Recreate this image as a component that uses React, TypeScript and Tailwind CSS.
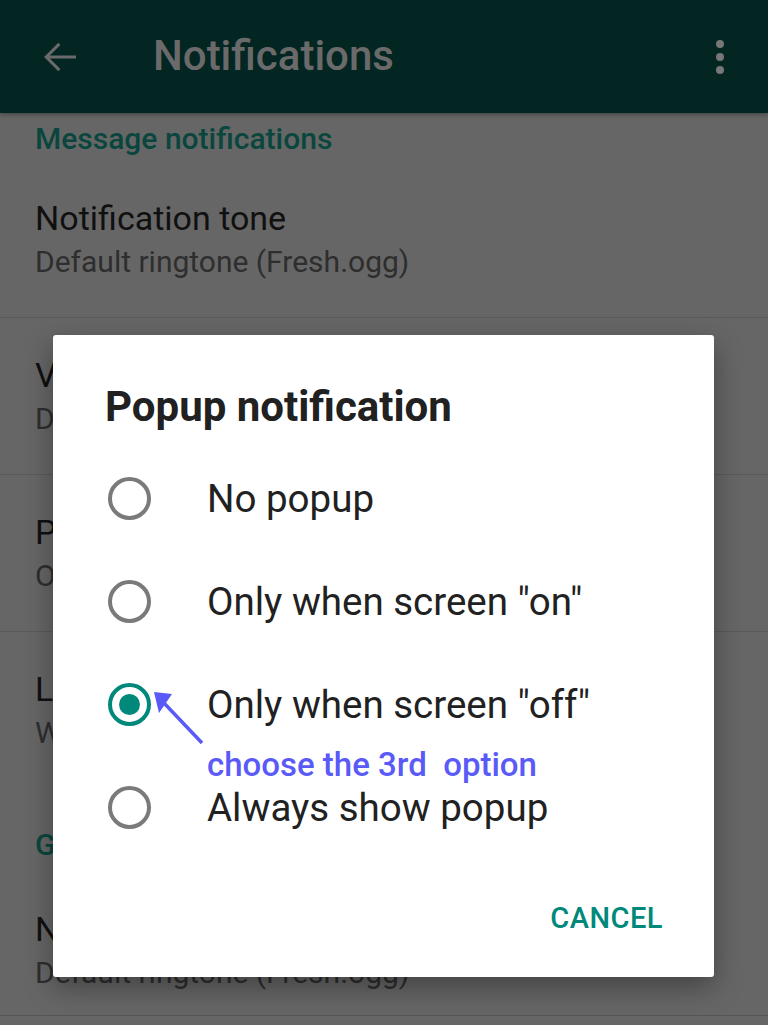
import type { ReactNode } from 'react'

const options = ['No popup', 'Only when screen "on"', 'Only when screen "off"', 'Always show popup']

function Radio ({ checked }: { checked: boolean }): JSX.Element {
  return (
    <svg width="43" height="43" viewBox="0 0 43 43" className="shrink-0">
      <circle cx="21.5" cy="21.5" r="19.5" fill="none" strokeWidth="4" stroke={checked ? '#00897b' : '#7a7a7a'} />
      {checked && <circle cx="21.5" cy="21.5" r="10.5" fill="#00897b" />}
    </svg>
  )
}

function Category ({ children, className }: { children: ReactNode, className: string }): JSX.Element {
  return (
    <div className={`px-[35px] text-[30px] leading-[32px] font-medium text-[#0a463e] ${className}`}>
      {children}
    </div>
  )
}

function Item ({ title, sub, className = 'h-[157px] border-b border-[#5a5a5a]' }: { title: string, sub: string, className?: string }): JSX.Element {
  return (
    <div className={`flex flex-col px-[35px] pt-[37px] ${className}`}>
      <span className="text-[34px] leading-[40px] text-[#101010]">{title}</span>
      <span className="mt-[6px] text-[30px] leading-[36px] text-[#2e2e2e]">{sub}</span>
    </div>
  )
}

export default function App (): JSX.Element {
  return (
    <div className="relative w-[768px] h-[1025px] overflow-hidden bg-[#666666]" style={{ fontFamily: 'Roboto, "Noto Sans", sans-serif' }}>
      <header className="h-[113px] bg-[#032622] flex items-center shadow-[0_2px_4px_rgba(0,0,0,0.3)] relative z-10">
        <svg width="48" height="48" viewBox="0 0 24 24" className="ml-[36px]" fill="#6a6a6a">
          <path d="M20 11.25H6.9l5.3-5.3-1.05-1.05L4.05 12l7.1 7.1 1.05-1.05-5.3-5.3H20z" />
        </svg>
        <h1 className="ml-[69px] text-[42px] leading-[48px] font-medium text-[#6a6a6a] mb-[2px]">Notifications</h1>
        <div className="ml-auto mr-[44px] flex flex-col gap-[5px]">
          <span className="w-[8px] h-[8px] rounded-full bg-[#777777]" />
          <span className="w-[8px] h-[8px] rounded-full bg-[#777777]" />
          <span className="w-[8px] h-[8px] rounded-full bg-[#777777]" />
        </div>
      </header>

      <main className="flex flex-col">
        <Category className="h-[48px] pt-[10px]">Message notifications</Category>
        <Item title="Notification tone" sub="Default ringtone (Fresh.ogg)" />
        <Item title="Vibrate" sub="Default" />
        <Item title="Popup notification" sub='Only when screen "off"' />
        <Item title="Light" sub="White" className="h-[157px]" />
        <Category className="h-[83px] pt-[40px]">Group notifications</Category>
        <Item title="Notification tone" sub="Default ringtone (Fresh.ogg)" className="h-[144px] border-b border-[#555555]" />
      </main>

      <section className="absolute left-[53px] top-[335px] w-[661px] h-[642px] bg-white rounded-[3px] shadow-[0_10px_28px_rgba(0,0,0,0.35)] z-20">
        <h2 className="pt-[48px] pl-[52px] text-[42px] leading-[48px] font-bold text-[#212121]">Popup notification</h2>
        <ul className="mt-[16px] flex flex-col">
          {options.map((o, i) => (
            <li key={o} className="h-[103px] flex items-center pl-[55px]">
              <Radio checked={i === 2} />
              <span className="ml-[56px] text-[38.5px] leading-[44px] text-[#212121]">{o}</span>
            </li>
          ))}
        </ul>
        <div className="mt-[41px] flex justify-end pr-[51px]">
          <button className="text-[29px] leading-[36px] font-medium tracking-[0.5px] text-[#00897b]">CANCEL</button>
        </div>

        {/* annotation drawn over the dialog */}
        <svg className="absolute left-0 top-0 pointer-events-none" width="661" height="642">
          <line x1="111" y1="368" x2="149" y2="408" stroke="#5a5af8" strokeWidth="3.5" />
          <polygon points="101,357 119,359 106,378" fill="#5a5af8" />
        </svg>
        <span className="absolute left-[154px] top-[410px] whitespace-pre text-[33px] leading-[40px] font-medium text-[#5a5af8]">choose the 3rd  option</span>
      </section>
    </div>
  )
}
